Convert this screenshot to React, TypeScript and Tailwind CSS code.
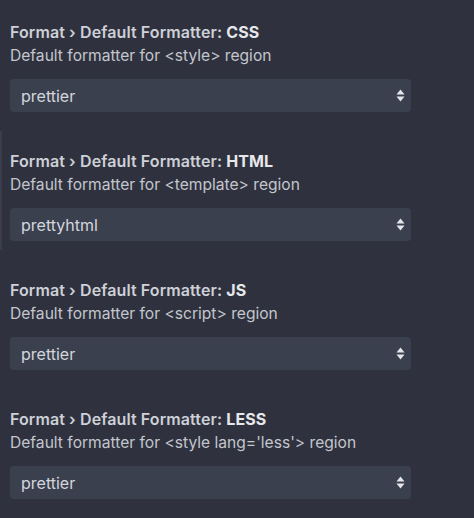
import React from "react";

const items = [
  { lang: "CSS", desc: "Default formatter for <style> region", value: "prettier" },
  { lang: "HTML", desc: "Default formatter for <template> region", value: "prettyhtml", focused: true },
  { lang: "JS", desc: "Default formatter for <script> region", value: "prettier" },
  { lang: "LESS", desc: "Default formatter for <style lang='less'> region", value: "prettier" },
];

function Arrows() {
  return (
    <svg width="9" height="13" viewBox="0 0 9 13" className="block">
      <path d="M4.5 0.5 L8.5 5.5 L0.5 5.5 Z" fill="#e4e6ea" />
      <path d="M4.5 12.5 L8.5 7.5 L0.5 7.5 Z" fill="#e4e6ea" />
    </svg>
  );
}

export default function App() {
  return (
    <div
      className="w-[474px] h-[518px] overflow-hidden bg-[#2f323e]"
      style={{ fontFamily: "Inter, 'Noto Sans', sans-serif" }}
    >
      {items.map((it) => (
        <div key={it.lang} className="relative pl-[10px] pt-[21px] pb-[17px]">
          {it.focused && (
            <div className="absolute left-0 top-[2px] bottom-[8px] w-[2px] bg-[#3a3e4b]" />
          )}
          <div className="text-[16px] leading-[23px] font-semibold text-[#cdd0d6] tracking-[0.1px]">
            Format › Default Formatter: <span className="font-bold text-[#e6e8ec]">{it.lang}</span>
          </div>
          <div className="text-[15.6px] leading-[23px] text-[#c3c6cd]">{it.desc}</div>
          <div className="mt-[12px] w-[401px] h-[33px] rounded-[4px] bg-[#3b404f] flex items-center justify-between pl-[11px] pr-[6px]">
            <span className="text-[16px] text-[#d3d6dc]">{it.value}</span>
            <Arrows />
          </div>
        </div>
      ))}
    </div>
  );
}
